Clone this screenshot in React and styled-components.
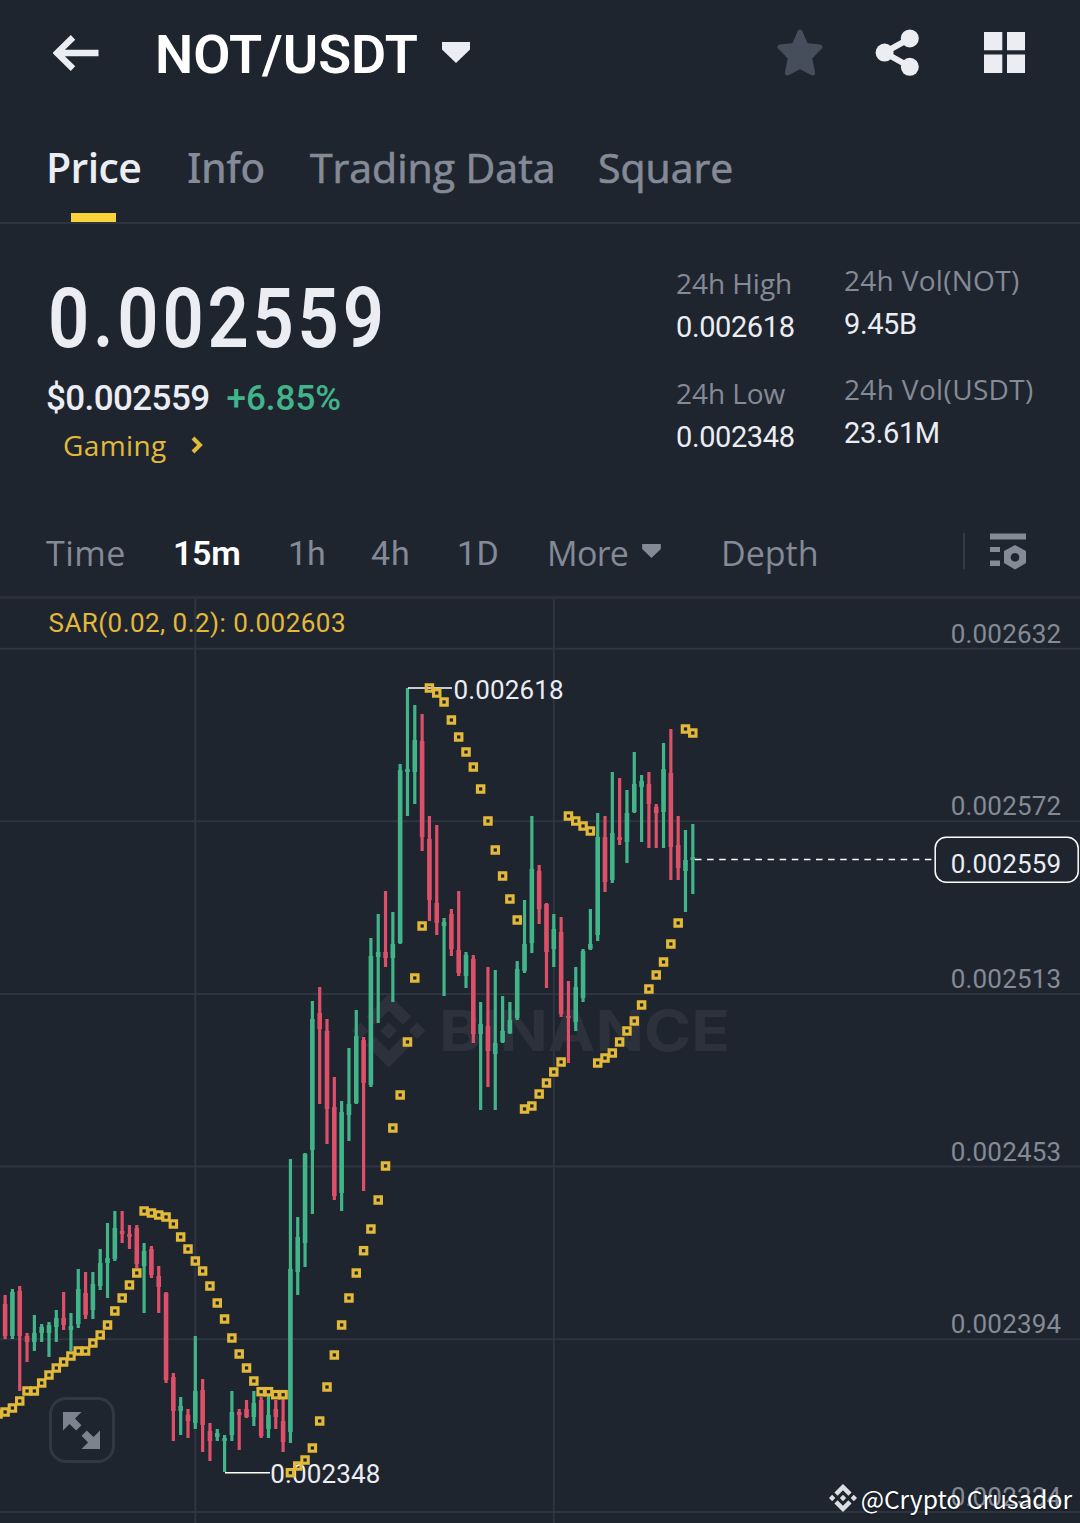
import React from 'react';
import styled, { createGlobalStyle } from 'styled-components';

const colors = {
  bg: '#1f252f',
  text: '#ebedf3',
  muted: '#848a96',
  line: '#2f3540',
  up: '#42b48a',
  down: '#dc5069',
  yellow: '#fad33c',
  gold: '#e3b93a',
};

const words = '"Open Sans", "Noto Sans", sans-serif';
const digits = 'Roboto, "Liberation Sans", sans-serif';

const GlobalStyle = createGlobalStyle`
  * {
    box-sizing: border-box;
  }
  body {
    margin: 0;
    background-color: ${colors.bg};
    font-family: ${words};
    color: ${colors.text};
  }
  svg {
    display: block;
  }
`;

const Screen = styled.div`
  position: relative;
  display: flex;
  flex-direction: column;
  width: 1080px;
  height: 1523px;
  overflow: hidden;
  background-color: ${colors.bg};
`;

const Header = styled.header`
  display: flex;
  align-items: center;
  height: 105px;
  padding: 0 55px 0 53px;
`;

const Pair = styled.h1`
  margin: 0 24px 0 56px;
  padding-top: 5px;
  font-family: ${digits};
  font-size: 54px;
  font-weight: 600;
  line-height: 1;
  color: #fff;
`;

const Actions = styled.div`
  display: flex;
  align-items: center;
  margin-left: auto;
`;

const Action = styled.span`
  margin-left: ${({ $gap }) => $gap || 0}px;
`;

const Tabs = styled.nav`
  display: grid;
  grid-template-columns: 141px 123px 288px 150px;
  height: 119px;
  padding-left: 46px;
  border-bottom: 2px solid ${colors.line};
`;

const Tab = styled.div`
  display: flex;
  flex-direction: column;
  justify-content: space-between;
  padding-top: 32px;
  font-family: ${({ $serifI }) => ($serifI ? '"Noto Sans", sans-serif' : words)};
  font-size: 41px;
  font-weight: ${({ $active }) => ($active ? 600 : 500)};
  line-height: 60px;
  letter-spacing: ${({ $spacing }) => $spacing || 0}px;
  white-space: nowrap;
  color: ${({ $active }) => ($active ? colors.text : colors.muted)};
  /* Open Sans has no medium weight, thicken the regular one a little */
  -webkit-text-stroke: ${({ $active, $serifI }) =>
    $active || $serifI ? 0 : '0.7px'};

  &::after {
    content: '';
    width: 45px;
    height: 9px;
    margin-left: 25px;
    background-color: ${({ $active }) =>
      $active ? colors.yellow : 'transparent'};
  }
`;

const Summary = styled.section`
  display: flex;
  height: 286px;
  padding-left: 46px;
`;

const Quote = styled.div`
  width: 630px;
  padding-top: 53px;
`;

const LastPrice = styled.div`
  margin-left: 2px;
  font-family: ${digits};
  font-size: 84px;
  font-weight: 600;
  line-height: 84px;
  letter-spacing: 4.4px;
  transform: scaleX(0.86);
  transform-origin: left;
`;

const FiatRow = styled.div`
  display: flex;
  gap: 17px;
  margin-top: 13px;
  font-family: ${digits};
  font-size: 35px;
  font-weight: 500;
  line-height: 50px;
`;

const Fiat = styled.span`
  letter-spacing: -0.6px;
`;

const Change = styled.span`
  color: ${colors.up};
`;

const Category = styled.div`
  display: flex;
  align-items: center;
  gap: 24px;
  margin: 1px 0 0 17px;
  font-size: 28px;
  line-height: 40px;
  letter-spacing: 0.4px;
  color: ${colors.gold};
`;

const StatColumn = styled.div`
  width: 168px;
  padding-top: ${({ $top }) => $top}px;
  white-space: nowrap;
`;

const Stat = styled.div`
  height: ${({ $height }) => $height}px;
`;

const StatLabel = styled.div`
  font-size: 28px;
  line-height: 42px;
  letter-spacing: ${({ $spacing }) => $spacing}px;
  color: ${colors.muted};
`;

const StatValue = styled.div`
  margin-top: 2px;
  font-family: ${digits};
  font-size: 29px;
  line-height: 42px;
  letter-spacing: -0.4px;
`;

const Intervals = styled.nav`
  display: grid;
  grid-template-columns: 127px 115px 83px 86px 90px 174px 242px 27px 36px;
  align-items: center;
  height: 89px;
  padding: 0 0 4px 46px;
  border-bottom: 3px solid #2a2f3a;
`;

const Interval = styled.div`
  display: flex;
  align-items: center;
  gap: 14px;
  padding-top: 4px;
  font-family: ${({ $word }) => ($word ? words : digits)};
  font-size: 34px;
  font-weight: ${({ $active }) => ($active ? 600 : 400)};
  line-height: 50px;
  letter-spacing: ${({ $spacing }) => $spacing || 0}px;
  color: ${({ $active }) => ($active ? '#fff' : colors.muted)};

  svg {
    margin-top: -5px;
  }
`;

const Divider = styled.div`
  width: 2px;
  height: 36px;
  background-color: #353b47;
`;

const ChartArea = styled.main`
  position: relative;
  height: 924px;
`;

const ExpandButton = styled.button`
  position: absolute;
  left: 48.5px;
  bottom: 60px;
  display: flex;
  align-items: center;
  justify-content: center;
  width: 66px;
  height: 66px;
  padding: 0;
  border: 3px solid #323843;
  border-radius: 17px;
  background-color: rgba(31, 37, 47, 0.7);
`;

const Credit = styled.div`
  position: absolute;
  right: 8px;
  bottom: 7px;
  display: flex;
  align-items: center;
  gap: 4px;
  font-family: 'Noto Sans CJK SC', sans-serif;
  font-size: 24.6px;
  line-height: 36px;
  white-space: nowrap;
  color: #fff;
  text-shadow: 0 1px 2px rgba(0, 0, 0, 0.6);
`;

const LOGO =
  'M16.624 13.9202l2.7175 2.7154-7.353 7.353-7.353-7.352 2.7175-2.7164 4.6355 4.6595 4.6356-4.6595zm4.6366-4.6366L24 12l-2.7154 2.7164L18.5682 12l2.6924-2.7164zm-9.272.001l2.7163 2.6914-2.7164 2.7174v-.001L9.2721 12l2.7164-2.7154zm-9.2722-.001L5.4088 12l-2.6914 2.6924L0 12l2.7164-2.7164zM11.9885.0115l7.353 7.329-2.7174 2.7154-4.6356-4.6356-4.6355 4.6595-2.7174-2.7154 7.353-7.353z';

// direction (1 up, 0 down), high, body top, body bottom, low
const candles = [
  [0, 1295, 1304, 1336, 1339],
  [1, 1289, 1292, 1336, 1339],
  [0, 1286, 1291, 1336, 1391],
  [0, 1333, 1336, 1342, 1362],
  [1, 1315, 1333, 1342, 1351],
  [1, 1324, 1327, 1333, 1342],
  [1, 1322, 1325, 1333, 1357],
  [1, 1310, 1318, 1327, 1342],
  [0, 1292, 1318, 1325, 1330],
  [1, 1313, 1326, 1330, 1351],
  [1, 1269, 1289, 1324, 1328],
  [0, 1272, 1293, 1315, 1319],
  [1, 1272, 1284, 1310, 1319],
  [1, 1249, 1263, 1286, 1290],
  [1, 1223, 1258, 1263, 1298],
  [1, 1211, 1228, 1259, 1261],
  [0, 1211, 1231, 1234, 1243],
  [0, 1225, 1234, 1237, 1249],
  [0, 1225, 1228, 1264, 1268],
  [1, 1243, 1251, 1266, 1313],
  [0, 1246, 1249, 1275, 1278],
  [0, 1266, 1276, 1287, 1313],
  [0, 1292, 1293, 1380, 1383],
  [0, 1373, 1377, 1411, 1441],
  [1, 1397, 1406, 1411, 1435],
  [0, 1409, 1415, 1421, 1438],
  [1, 1336, 1391, 1423, 1429],
  [0, 1379, 1390, 1425, 1452],
  [0, 1423, 1431, 1441, 1461],
  [1, 1429, 1433, 1437, 1441],
  [1, 1435, 1438, 1441, 1472],
  [1, 1391, 1412, 1435, 1441],
  [0, 1409, 1412, 1415, 1450],
  [0, 1400, 1409, 1417, 1418],
  [1, 1391, 1403, 1417, 1426],
  [0, 1397, 1400, 1436, 1438],
  [1, 1394, 1415, 1429, 1438],
  [0, 1400, 1409, 1417, 1429],
  [0, 1397, 1421, 1442, 1452],
  [1, 1159, 1269, 1432, 1443],
  [1, 1217, 1237, 1272, 1295],
  [1, 1153, 1154, 1243, 1267],
  [1, 1001, 1019, 1150, 1214],
  [0, 987, 1013, 1029, 1104],
  [0, 1019, 1031, 1109, 1144],
  [0, 1077, 1107, 1196, 1200],
  [1, 1101, 1112, 1193, 1211],
  [1, 1048, 1104, 1115, 1141],
  [1, 1010, 1036, 1103, 1104],
  [0, 1037, 1040, 1083, 1191],
  [1, 938, 956, 1085, 1087],
  [1, 914, 952, 957, 1023],
  [0, 891, 952, 958, 967],
  [1, 912, 944, 958, 1002],
  [1, 764, 770, 943, 944],
  [1, 688, 769, 772, 816],
  [1, 705, 740, 772, 804],
  [0, 714, 741, 837, 851],
  [0, 816, 839, 900, 921],
  [0, 825, 903, 923, 935],
  [1, 918, 922, 926, 996],
  [0, 909, 914, 949, 956],
  [0, 891, 950, 973, 976],
  [1, 952, 955, 976, 988],
  [0, 955, 959, 1034, 1043],
  [1, 1002, 1024, 1034, 1110],
  [0, 967, 1026, 1051, 1087],
  [1, 970, 1043, 1054, 1110],
  [1, 996, 1031, 1042, 1043],
  [1, 1002, 1020, 1033, 1034],
  [1, 961, 969, 1018, 1020],
  [1, 900, 944, 971, 973],
  [1, 816, 869, 943, 953],
  [0, 865, 871, 909, 924],
  [0, 903, 904, 952, 988],
  [1, 914, 929, 949, 967],
  [0, 917, 932, 1014, 1017],
  [0, 981, 1016, 1018, 1063],
  [1, 967, 987, 1022, 1031],
  [1, 949, 951, 998, 1002],
  [1, 909, 944, 949, 950],
  [1, 813, 837, 935, 941],
  [0, 816, 837, 882, 892],
  [1, 772, 833, 880, 883],
  [0, 778, 837, 840, 845],
  [1, 790, 813, 842, 863],
  [1, 752, 784, 812, 813],
  [1, 775, 781, 787, 842],
  [0, 772, 784, 804, 848],
  [0, 804, 807, 813, 848],
  [1, 743, 769, 812, 848],
  [0, 729, 773, 847, 880],
  [0, 816, 845, 868, 880],
  [1, 830, 860, 871, 912],
  [1, 824, 857, 860, 894],
];

// parabolic SAR, one value per candle
const sar = [
  1412, 1408, 1401, 1391, 1391, 1383, 1375, 1368, 1362, 1356, 1351, 1351, 1343,
  1335, 1325, 1311, 1298, 1285, 1273, 1211, 1213, 1215, 1217, 1224, 1237, 1249,
  1261, 1271, 1286, 1303, 1319, 1338, 1354, 1368, 1381, 1391.7, 1391.7, 1394.7,
  1394.7, 1472.7, 1466, 1460, 1448, 1421, 1387, 1355, 1325, 1298, 1273, 1250.7,
  1229, 1200, 1166, 1128, 1095, 1042, 978, 926, 688, 693, 702, 720, 737, 752,
  767, 789, 821, 850, 876, 899, 920, 1109, 1106, 1094, 1083, 1072, 1062, 816,
  821, 826, 831, 1063, 1058, 1053, 1042, 1031, 1021, 1005, 989, 975, 962, 944,
  923, 729, 733,
];

const gridRows = [
  { y: 648.7, label: '0.002632' },
  { y: 821.3, label: '0.002572' },
  { y: 994, label: '0.002513' },
  { y: 1166.5, label: '0.002453' },
  { y: 1339.2, label: '0.002394' },
  { y: 1512, label: '0.002334' },
];

const xOf = (i) => 5.1 + i * 7.316;

const Mark = ({ x, y }) => (
  <rect
    x={x - 3.2}
    y={y - 3.2}
    width="6.4"
    height="6.4"
    fill="none"
    stroke={colors.gold}
    strokeWidth="3.1"
  />
);

const Chart = () => (
  <svg width="1080" height="924" viewBox="0 599 1080 924">
    <g stroke={colors.line} strokeWidth="2">
      {gridRows.map(({ y }) => (
        <line key={y} x1="0" x2="1080" y1={y} y2={y} />
      ))}
      <line x1="195.3" x2="195.3" y1="599" y2="1523" />
      <line x1="553.8" x2="553.8" y1="599" y2="1523" />
    </g>

    <g fill="#2c313c">
      <path d={LOGO} transform="translate(352 994) scale(3.06)" />
      <text
        x="439"
        y="1051"
        fontFamily="Inter, sans-serif"
        fontSize="56"
        fontWeight="700"
        textLength="291"
        lengthAdjust="spacingAndGlyphs"
      >
        BINANCE
      </text>
    </g>

    {candles.map(([up, high, top, bottom, low], i) => (
      <g key={i} fill={up ? colors.up : colors.down}>
        <rect x={xOf(i) - 1.6} y={high} width="3.2" height={low - high} />
        <rect x={xOf(i) - 2.3} y={top} width="4.6" height={bottom - top} />
      </g>
    ))}

    <g fill={colors.text} fontFamily={digits} fontSize="26">
      <path d="M408 688H452M225 1472.7H270" stroke="#fff" strokeWidth="1.6" />
      <text x="453.5" y="698.7" textLength="110">
        0.002618
      </text>
      <text x="270.3" y="1482.7" textLength="110">
        0.002348
      </text>
    </g>

    <Mark x={-2} y={1414} />
    {sar.map((y, i) => (
      <Mark key={i} x={xOf(i)} y={y} />
    ))}

    <text
      x="48.5"
      y="631.7"
      fill={colors.gold}
      fontFamily={digits}
      fontSize="26"
      textLength="297"
    >
      SAR(0.02, 0.2): 0.002603
    </text>

    <g fill={colors.muted} fontFamily={digits} fontSize="26">
      {gridRows.map(({ y, label }) => (
        <text key={label} x="950.7" y={y - 6} textLength="110.5">
          {label}
        </text>
      ))}
    </g>

    <path
      d="M695 859.5H934"
      stroke="#fff"
      strokeWidth="1.5"
      strokeDasharray="6.5 5.6"
    />
    <rect
      x="935.2"
      y="837.2"
      width="143"
      height="45"
      rx="11"
      fill={colors.bg}
      stroke="#fff"
      strokeWidth="1.5"
    />
    <text
      x="950.7"
      y="872.5"
      fill={colors.text}
      fontFamily={digits}
      fontSize="26"
      textLength="110.5"
    >
      0.002559
    </text>
  </svg>
);

const BackIcon = () => (
  <svg width="46" height="36" viewBox="0 0 46 36" fill="none">
    <path
      d="M20 2.4L4 18L20 33.6M4 18H45.5"
      stroke={colors.text}
      strokeWidth="6.4"
    />
  </svg>
);

const StarIcon = () => (
  <svg width="46" height="48" viewBox="0 0 46 48">
    <path
      d="M23 3L28.8 16.6L43 18L32.6 28.4L35.6 44L23 37.2L10.4 44L13.4 28.4L3 18L17.2 16.6Z"
      fill="#464e5b"
      stroke="#464e5b"
      strokeWidth="5"
      strokeLinejoin="round"
    />
  </svg>
);

const ShareIcon = () => (
  <svg width="44" height="48" viewBox="0 0 44 48" fill={colors.text}>
    <path
      d="M34.6 9.6L9.4 23.6L34.6 37.6"
      fill="none"
      stroke={colors.text}
      strokeWidth="6"
    />
    <circle cx="34.8" cy="9.4" r="9" />
    <circle cx="9.6" cy="23.6" r="9" />
    <circle cx="34.8" cy="37.8" r="9" />
  </svg>
);

const GridIcon = () => (
  <svg width="41" height="41" viewBox="0 0 41 41">
    <path
      d="M0 0h18.3v18.2H0zM23 0h18v18.2H23zM0 22.6h18.3V41H0zM23 22.6h18V41H23z"
      fill={colors.text}
    />
  </svg>
);

const Caret = ({ width, height, color }) => (
  <svg width={width} height={height} viewBox="0 0 28 21">
    <path d="M0 0H28V7.5L14 21L0 7.5Z" fill={color} />
  </svg>
);

const SettingsIcon = () => (
  <svg width="37" height="37" viewBox="0 0 37 37" fill={colors.muted}>
    <path d="M0 0.5H36V6.5H0zM0 14H10V19H0zM0 27.5H10V33H0z" />
    <path
      fillRule="evenodd"
      d="M25 12L36 18V30L25 36.5L14 30V18ZM25 20a4.3 4.3 0 1 0 0.01 0Z"
    />
  </svg>
);

const App = () => {
  return (
    <Screen>
      <GlobalStyle />
      <Header>
        <BackIcon />
        <Pair>NOT/USDT</Pair>
        <Caret width={28} height={21} color={colors.text} />
        <Actions>
          <Action>
            <StarIcon />
          </Action>
          <Action $gap={52}>
            <ShareIcon />
          </Action>
          <Action $gap={65}>
            <GridIcon />
          </Action>
        </Actions>
      </Header>

      <Tabs>
        <Tab $active $spacing={-0.6}>
          Price
        </Tab>
        <Tab $serifI $spacing={-0.5}>
          Info
        </Tab>
        <Tab>Trading Data</Tab>
        <Tab>Square</Tab>
      </Tabs>

      <Summary>
        <Quote>
          <LastPrice>0.002559</LastPrice>
          <FiatRow>
            <Fiat>$0.002559</Fiat>
            <Change>+6.85%</Change>
          </FiatRow>
          <Category>
            Gaming
            <svg width="12" height="18" viewBox="0 0 12 18" fill="none">
              <path
                d="M2 2L9 9L2 16"
                stroke={colors.gold}
                strokeWidth="4"
              />
            </svg>
          </Category>
        </Quote>
        <StatColumn $top={38}>
          <Stat $height={110}>
            <StatLabel $spacing={-0.05}>24h High</StatLabel>
            <StatValue>0.002618</StatValue>
          </Stat>
          <Stat $height={110}>
            <StatLabel $spacing={-0.05}>24h Low</StatLabel>
            <StatValue>0.002348</StatValue>
          </Stat>
        </StatColumn>
        <StatColumn $top={35}>
          <Stat $height={109}>
            <StatLabel $spacing={0.3}>24h Vol(NOT)</StatLabel>
            <StatValue>9.45B</StatValue>
          </Stat>
          <Stat $height={109}>
            <StatLabel $spacing={0.35}>24h Vol(USDT)</StatLabel>
            <StatValue>23.61M</StatValue>
          </Stat>
        </StatColumn>
      </Summary>

      <Intervals>
        <Interval $word $spacing={0.5}>
          Time
        </Interval>
        <Interval $active $spacing={-0.3}>
          15m
        </Interval>
        <Interval>1h</Interval>
        <Interval $spacing={1}>4h</Interval>
        <Interval $spacing={0.5}>1D</Interval>
        <Interval $word $spacing={-0.7}>
          More
          <Caret width={19} height={14} color={colors.muted} />
        </Interval>
        <Interval $word>Depth</Interval>
        <Divider />
        <SettingsIcon />
      </Intervals>

      <ChartArea>
        <Chart />
        <ExpandButton>
          <svg width="37" height="37" viewBox="0 0 37 37" fill="#7c828e">
            <path d="M0 0H18.5L12 6.5L18.4 13.2L13.2 18.4L6.5 12L0 18.5Z" />
            <path d="M37 37H18.5L25 30.5L18.6 23.8L23.8 18.6L30.5 25L37 18.5Z" />
          </svg>
        </ExpandButton>
        <Credit>
          <svg width="28" height="28" viewBox="0 0 24 24" fill="#dcdee2">
            <path d={LOGO} />
          </svg>
          @Crypto Crusador
        </Credit>
      </ChartArea>
    </Screen>
  );
};

export default App;
